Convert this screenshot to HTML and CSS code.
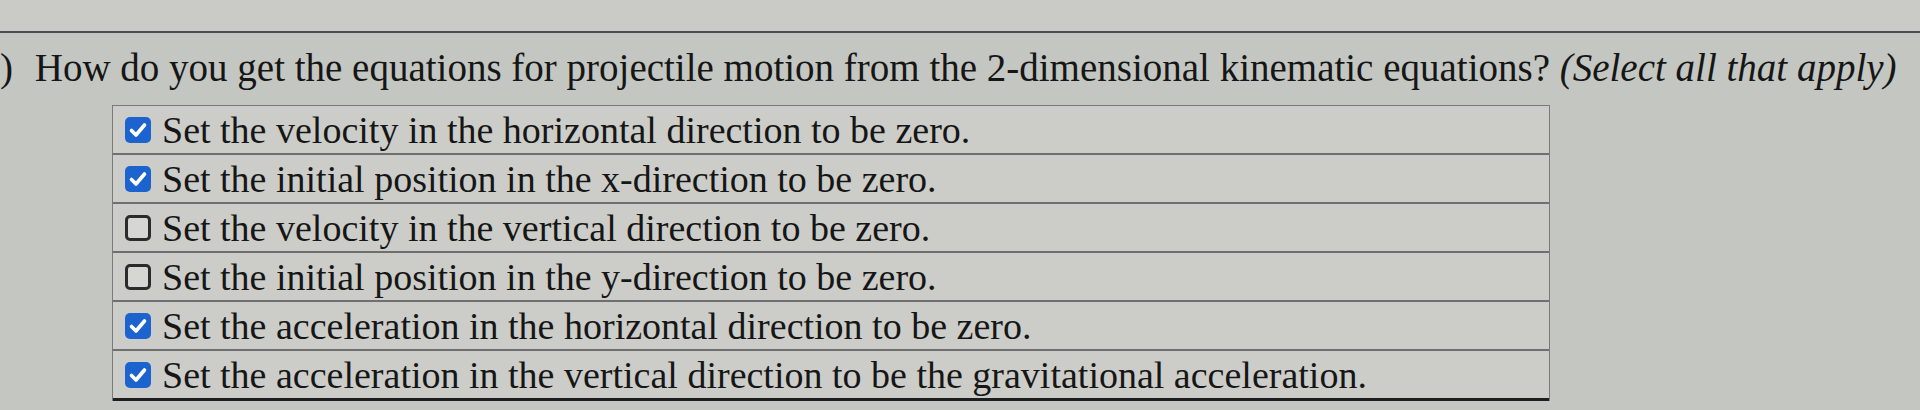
FILE: index.html
```html
<!DOCTYPE html>
<html>
<head>
<meta charset="utf-8">
<link rel="stylesheet" href="styles.css">
</head>
<body>
<div class="top"></div>
<div class="rule"></div>
<div class="question"><span class="num">)</span> How do you get the equations for projectile motion from the 2-dimensional kinematic equations? <span class="note">(Select all that apply)</span></div>
<div class="options">
  <div class="opt"><span class="box checked"><svg viewBox="0 0 24 24"><path d="M5.5 12.5l4.5 4.5 8.5-10"/></svg></span><span class="label">Set the velocity in the horizontal direction to be zero.</span></div>
  <div class="opt"><span class="box checked"><svg viewBox="0 0 24 24"><path d="M5.5 12.5l4.5 4.5 8.5-10"/></svg></span><span class="label">Set the initial position in the x-direction to be zero.</span></div>
  <div class="opt"><span class="box"></span><span class="label">Set the velocity in the vertical direction to be zero.</span></div>
  <div class="opt"><span class="box"></span><span class="label">Set the initial position in the y-direction to be zero.</span></div>
  <div class="opt"><span class="box checked"><svg viewBox="0 0 24 24"><path d="M5.5 12.5l4.5 4.5 8.5-10"/></svg></span><span class="label">Set the acceleration in the horizontal direction to be zero.</span></div>
  <div class="opt last"><span class="box checked"><svg viewBox="0 0 24 24"><path d="M5.5 12.5l4.5 4.5 8.5-10"/></svg></span><span class="label">Set the acceleration in the vertical direction to be the gravitational acceleration.</span></div>
</div>
</body>
</html>
```
FILE: styles.css
```css
html, body {
  margin: 0;
  padding: 0;
}
body {
  width: 1920px;
  height: 410px;
  overflow: hidden;
  background: #c4c6c2;
  font-family: "Liberation Serif", "Times New Roman", serif;
  color: #161616;
}
.top {
  height: 31px;
  background: #cacbc7;
}
.rule {
  height: 2px;
  background: #4d4d4d;
}
.question {
  font-size: 39px;
  line-height: 44px;
  margin-top: 13px;
  white-space: nowrap;
}
.num {
  margin-right: 12px;
}
.note {
  font-style: italic;
}
.options {
  margin-top: 15px;
  margin-left: 112px;
  width: 1436px;
  border: 1px solid #7a7a7a;
  border-bottom: none;
  background: #cccdc9;
  display: flex;
  flex-direction: column;
}
.opt {
  height: 47px;
  border-bottom: 2px solid #6f706d;
  display: flex;
  align-items: center;
  gap: 11px;
  padding-left: 12px;
}
.opt.last {
  border-bottom: 3px solid #1e1e1e;
}
.label {
  font-size: 38px;
  line-height: 42px;
  white-space: nowrap;
}
.box {
  width: 26px;
  height: 26px;
  box-sizing: border-box;
  border-radius: 5px;
  border: 3px solid #2b2b2b;
  background: #d6d7d3;
  display: flex;
  align-items: center;
  justify-content: center;
  flex: none;
}
.box.checked {
  border: none;
  background: #1d63cf;
}
.box svg {
  width: 24px;
  height: 24px;
}
.box svg path {
  fill: none;
  stroke: #ffffff;
  stroke-width: 3.6;
  stroke-linecap: round;
  stroke-linejoin: round;
}
```
